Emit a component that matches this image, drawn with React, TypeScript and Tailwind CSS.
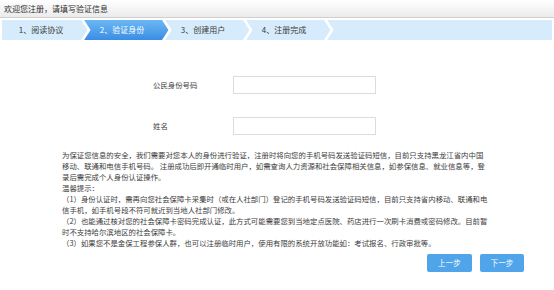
import React from 'react';

const steps = ['1、阅读协议', '2、验证身份', '3、创建用户', '4、注册完成'];
const activeStep = 1;

const notes = [
  '为保证您信息的安全，我们需要对您本人的身份进行验证，注册时将向您的手机号码发送验证码短信，目前只支持黑龙江省内中国',
  '移动、联通和电信手机号码。 注册成功后即开通临时用户，如需查询人力资源和社会保障相关信息，如参保信息、就业信息等，登',
  '录后需完成个人身份认证操作。',
  '温馨提示：',
  '（1）身份认证时，需再向您社会保障卡采集时（或在人社部门）登记的手机号码发送验证码短信，目前只支持省内移动、联通和电',
  '信手机，如手机号段不符可就近到当地人社部门修改。',
  '（2）也能通过核对您的社会保障卡密码完成认证，此方式可能需要您到当地定点医院、药店进行一次刷卡消费或密码修改。目前暂',
  '时不支持哈尔滨地区的社会保障卡。',
  '（3）如果您不是金保工程参保人群，也可以注册临时用户，使用有限的系统开放功能如：考试报名、行政审批等。',
];

const Chevron = () => (
  <svg
    className="absolute top-0 left-full z-10 h-[20px] w-[10px] -ml-[1px] overflow-visible"
    viewBox="0 0 10 20"
  >
    <polyline points="0,-1 7,10 0,21" fill="none" stroke="#ffffff" strokeWidth="2.6" />
  </svg>
);

const StepBar: React.FC = () => (
  <div className="mx-[2px] mt-[2px] flex h-[20px] bg-[#d6ecfc]">
    {steps.map((label, i) => (
      <div key={label} className="relative flex h-full w-[81px] items-center justify-center pr-[3px]">
        {i === activeStep && (
          <svg className="absolute inset-0 h-[20px] w-[81px] overflow-visible" viewBox="0 0 81 20">
            <defs>
              <linearGradient id="activeStep" x1="0" y1="0" x2="0" y2="1">
                <stop offset="0" stopColor="#6cb8f4" />
                <stop offset="1" stopColor="#3a8de4" />
              </linearGradient>
            </defs>
            <polygon points="0,0 81,0 88,10 81,20 0,20 7,10" fill="url(#activeStep)" />
          </svg>
        )}
        <span
          className={`relative z-[5] text-[8px] leading-none ${
            i === activeStep ? 'text-white' : 'text-[#3a3a3a]'
          }`}
        >
          {label}
        </span>
        <Chevron />
      </div>
    ))}
  </div>
);

const Field: React.FC<{ label: string }> = ({ label }) => (
  <div className="flex items-center">
    <span className="w-[80px] text-[7.4px] leading-none text-[#3d3d3d]">{label}</span>
    <input
      type="text"
      className="h-[18px] w-[143px] border border-[#dcdcdc] bg-white px-1 text-[8px] outline-none"
    />
  </div>
);

export default function App() {
  return (
    <div
      className="relative h-[290px] w-[554px] overflow-hidden bg-white"
      style={{ fontFamily: '"Noto Sans CJK SC", "Noto Sans", sans-serif' }}
    >
      <div className="h-[18px] border-b border-[#cfcfcf] bg-gradient-to-b from-white to-[#ebebeb] pl-[4px] text-[8px] leading-[17px] text-[#2e2e2e]">
        欢迎您注册，请填写验证信息
      </div>

      <StepBar />

      <div className="ml-[153px] mt-[36px] flex flex-col gap-[23px]">
        <Field label="公民身份号码" />
        <Field label="姓名" />
      </div>

      <div className="ml-[62px] mt-[14px] text-[7.4px] leading-[11px] text-[#3d3d3d]">
        {notes.map((line) => (
          <div key={line} className="whitespace-nowrap">
            {line}
          </div>
        ))}
      </div>

      <div className="mr-[30px] mt-[6px] flex justify-end gap-[8px]">
        <button className="h-[18px] w-[45px] rounded-[2px] bg-[#50a4ea] text-[7.6px] text-white">上一步</button>
        <button className="h-[18px] w-[44px] rounded-[2px] bg-[#50a4ea] text-[7.6px] text-white">下一步</button>
      </div>
    </div>
  );
}
